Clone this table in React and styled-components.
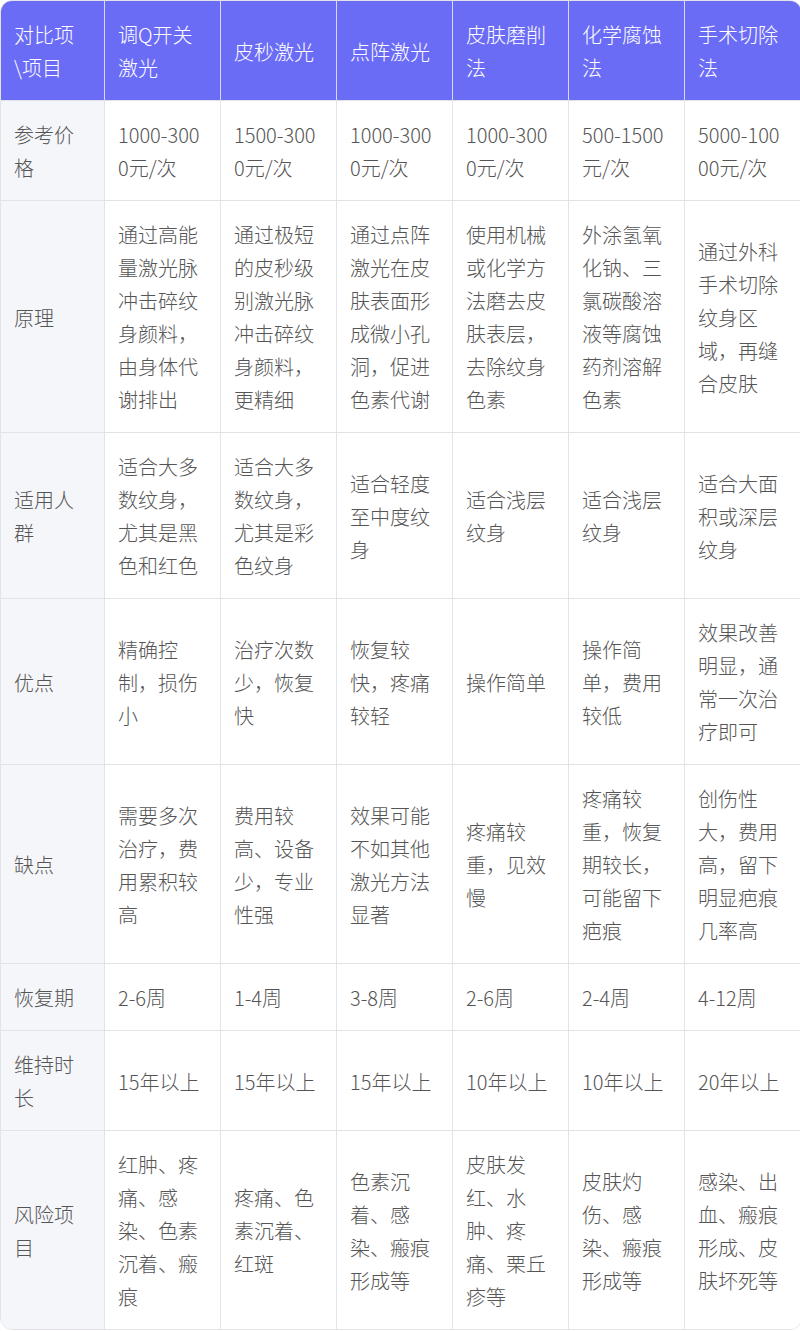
import React from "react";
import styled, { createGlobalStyle } from "styled-components";

const Global = createGlobalStyle`
  html, body { margin: 0; padding: 0; background: #ffffff; }
  body { font-family: "Noto Sans CJK SC", "Noto Sans", sans-serif; }
`;

const Table = styled.table`
  width: 800px;
  table-layout: fixed;
  border-collapse: separate;
  border-spacing: 0;
  border: 1px solid #e2e3e8;
  border-radius: 12px;
  overflow: hidden;
  font-size: 20px;
  line-height: 33px;
  font-weight: 300;
  color: #555555;
`;

const Col = styled.col`
  width: ${(p) => (p.$label ? "104px" : "116px")};
`;

const HeadCell = styled.th`
  background: #6b6cf6;
  color: #ffffff;
  font-weight: 300;
  text-align: left;
  vertical-align: middle;
  padding: 17px 13px 16px 13px;
  border-right: 1px solid #d9d9f5;
  word-break: break-all;
  &:last-child { border-right: none; }
`;

const Cell = styled.td`
  background: ${(p) => (p.$label ? "#f5f6fa" : "#ffffff")};
  text-align: left;
  vertical-align: middle;
  padding: 17px 13px 16px 13px;
  border-top: 1px solid #e2e3e8;
  border-right: 1px solid #e2e3e8;
  word-break: break-all;
  &:last-child { border-right: none; }
`;

const columns = ["对比项\\项目", "调Q开关激光", "皮秒激光", "点阵激光", "皮肤磨削法", "化学腐蚀法", "手术切除法"];

const rows = [
  ["参考价格", "1000-3000元/次", "1500-3000元/次", "1000-3000元/次", "1000-3000元/次", "500-1500元/次", "5000-10000元/次"],
  ["原理", "通过高能量激光脉冲击碎纹身颜料，由身体代谢排出", "通过极短的皮秒级别激光脉冲击碎纹身颜料，更精细", "通过点阵激光在皮肤表面形成微小孔洞，促进色素代谢", "使用机械或化学方法磨去皮肤表层，去除纹身色素", "外涂氢氧化钠、三氯碳酸溶液等腐蚀药剂溶解色素", "通过外科手术切除纹身区域，再缝合皮肤"],
  ["适用人群", "适合大多数纹身，尤其是黑色和红色", "适合大多数纹身，尤其是彩色纹身", "适合轻度至中度纹身", "适合浅层纹身", "适合浅层纹身", "适合大面积或深层纹身"],
  ["优点", "精确控制，损伤小", "治疗次数少，恢复快", "恢复较快，疼痛较轻", "操作简单", "操作简单，费用较低", "效果改善明显，通常一次治疗即可"],
  ["缺点", "需要多次治疗，费用累积较高", "费用较高、设备少，专业性强", "效果可能不如其他激光方法显著", "疼痛较重，见效慢", "疼痛较重，恢复期较长，可能留下疤痕", "创伤性大，费用高，留下明显疤痕几率高"],
  ["恢复期", "2-6周", "1-4周", "3-8周", "2-6周", "2-4周", "4-12周"],
  ["维持时长", "15年以上", "15年以上", "15年以上", "10年以上", "10年以上", "20年以上"],
  ["风险项目", "红肿、疼痛、感染、色素沉着、瘢痕", "疼痛、色素沉着、红斑", "色素沉着、感染、瘢痕形成等", "皮肤发红、水肿、疼痛、栗丘疹等", "皮肤灼伤、感染、瘢痕形成等", "感染、出血、瘢痕形成、皮肤坏死等"],
];

export default function App() {
  return (
    <>
      <Global />
      <Table>
        <colgroup>
          {columns.map((c, i) => (
            <Col key={c} $label={i === 0} />
          ))}
        </colgroup>
        <thead>
          <tr>
            {columns.map((c) => (
              <HeadCell key={c}>{c}</HeadCell>
            ))}
          </tr>
        </thead>
        <tbody>
          {rows.map((r) => (
            <tr key={r[0]}>
              {r.map((v, i) => (
                <Cell key={i} $label={i === 0}>
                  {v}
                </Cell>
              ))}
            </tr>
          ))}
        </tbody>
      </Table>
    </>
  );
}
